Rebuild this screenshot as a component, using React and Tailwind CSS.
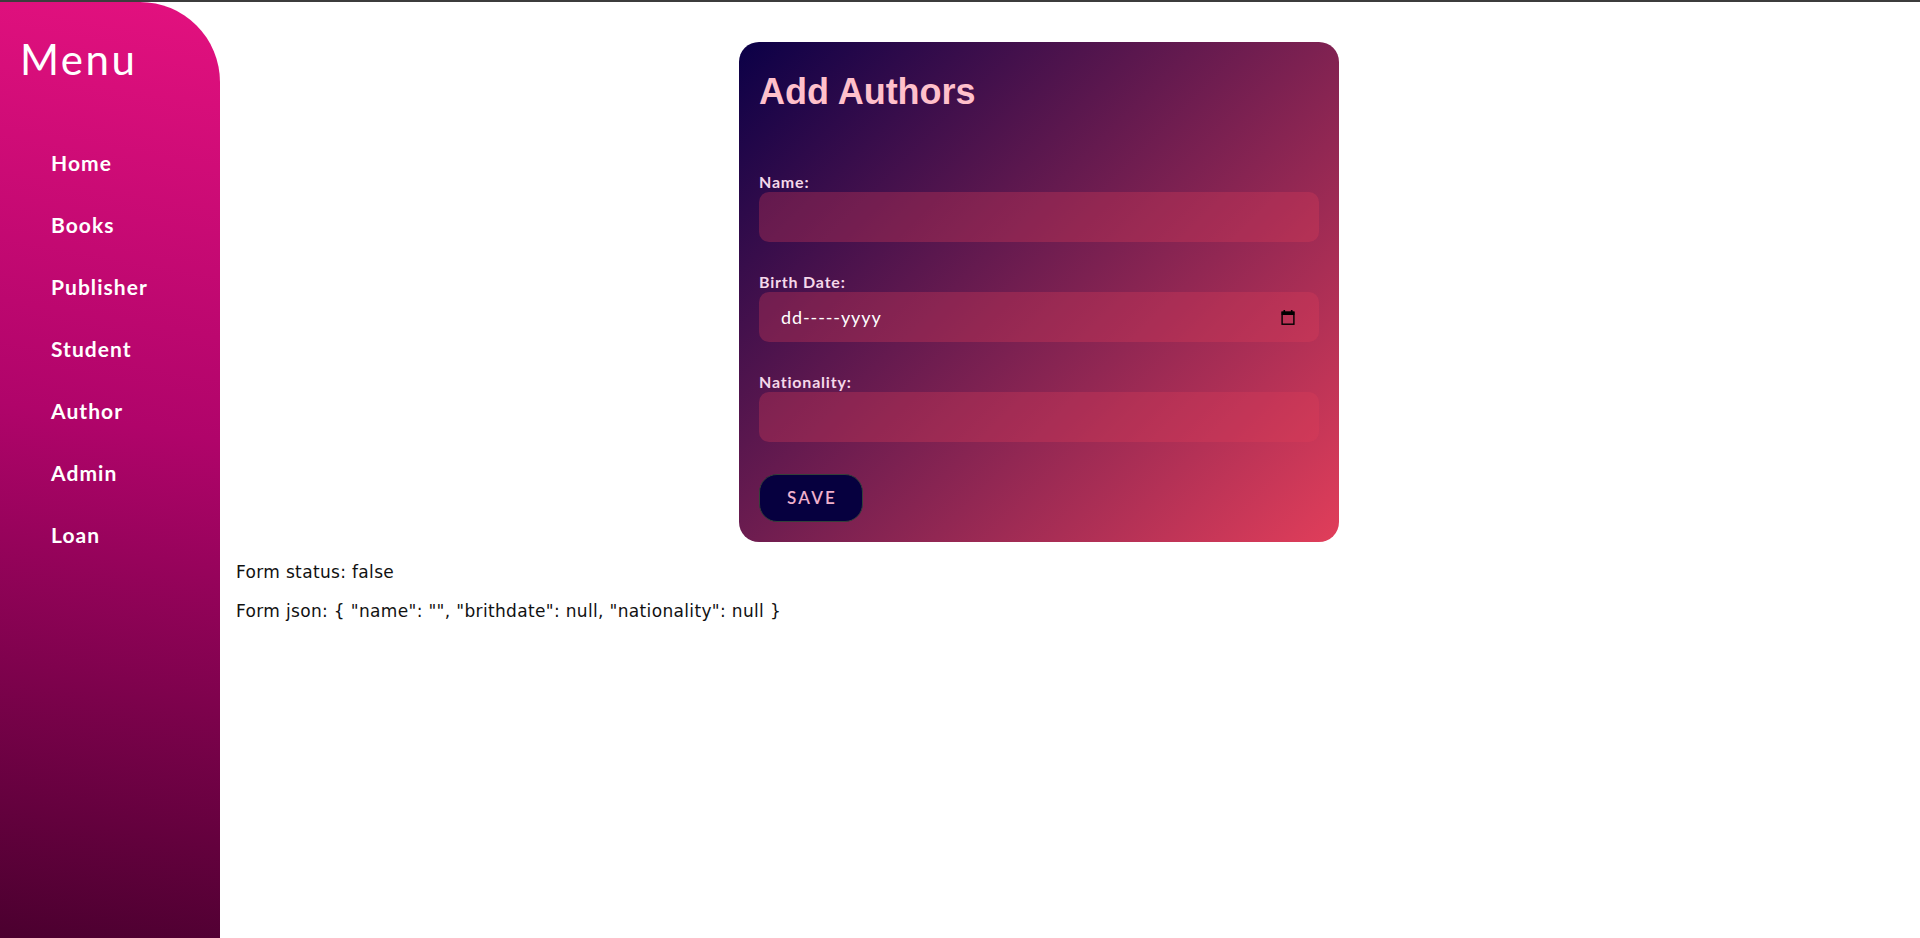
import React from "react";

// Sidebar links
const LINKS = ["Home", "Books", "Publisher", "Student", "Author", "Admin", "Loan"];

// Chrome-style calendar picker glyph
function CalendarIcon() {
  return (
    <svg width="14" height="15" viewBox="0 0 14 15" fill="none">
      <rect x="2.5" y="0" width="1.6" height="2.5" fill="#000" />
      <rect x="9.9" y="0" width="1.6" height="2.5" fill="#000" />
      <rect x="0.6" y="1.6" width="12.8" height="3.4" fill="#000" />
      <rect x="1.1" y="2.2" width="11.8" height="12" stroke="#000" strokeWidth="1.4" />
    </svg>
  );
}

function Field({ label, children }) {
  return (
    <div className="mb-[30px] flex flex-col">
      <label className="text-[16px] leading-[20px] font-bold tracking-[0.05em] text-[#f5d8ea]">
        {label}
      </label>
      {children}
    </div>
  );
}

export default function App() {
  return (
    <div className="min-h-screen bg-white font-['Lato','Noto_Sans',sans-serif] text-black">
      <div className="h-[2px] bg-[#3c3c3c]" />
      <div className="flex min-h-[936px]">
        <aside className="w-[220px] shrink-0 rounded-tr-[80px] bg-[linear-gradient(190deg,#e3117f_0%,#b0046a_45%,#4b002f_100%)] pt-[37px] text-white">
          <h2 className="pl-[20px] text-[42px] leading-[40px] tracking-[0.06em]">Menu</h2>
          <nav className="mt-[53px] flex flex-col pl-[51px]">
            {LINKS.map((l) => (
              <a key={l} href="#" className="text-[21px] leading-[62px] font-bold tracking-[0.05em]">
                {l}
              </a>
            ))}
          </nav>
        </aside>

        <main className="flex-1 pl-4 pt-10">
          <div className="flex justify-center pr-[78px]">
            <form className="w-[600px] rounded-[20px] bg-[linear-gradient(135deg,#0b0047,#e13e5a)] px-5 pt-[30px] pb-5">
              <h1 className="mb-[60px] font-['Liberation_Sans',Arial,sans-serif] text-[36px] leading-[40px] font-bold text-[#ffc0cb]">
                Add Authors
              </h1>

              <Field label="Name:">
                <input className="h-[50px] rounded-[10px] bg-[#e03e5a4d] px-5 text-white outline-none" />
              </Field>

              <Field label="Birth Date:">
                <div className="flex h-[50px] items-center justify-between rounded-[10px] bg-[#e03e5a4d] pl-[22px] pr-[24px]">
                  <span className="text-[18px] tracking-[0.05em] text-white">dd-----yyyy</span>
                  <CalendarIcon />
                </div>
              </Field>

              <Field label="Nationality:">
                <input className="h-[50px] rounded-[10px] bg-[#e03e5a4d] px-5 text-white outline-none" />
              </Field>

              <button
                type="button"
                className="mt-[2px] h-[48px] w-[104px] rounded-[18px] border border-[#34403a] bg-[#06003f] pl-[2px] text-[17px] font-semibold tracking-[0.13em] text-[#f0b0cc]"
              >
                SAVE
              </button>
            </form>
          </div>

          <div className="font-['DejaVu_Sans',sans-serif] text-[17px] leading-[22px] tracking-[0.02em] text-[#111]">
            <p className="mt-[19px]">Form status: false</p>
            <p className="mt-[17px]">
              Form json: {'{ "name": "", "brithdate": null, "nationality": null }'}
            </p>
          </div>
        </main>
      </div>
    </div>
  );
}
